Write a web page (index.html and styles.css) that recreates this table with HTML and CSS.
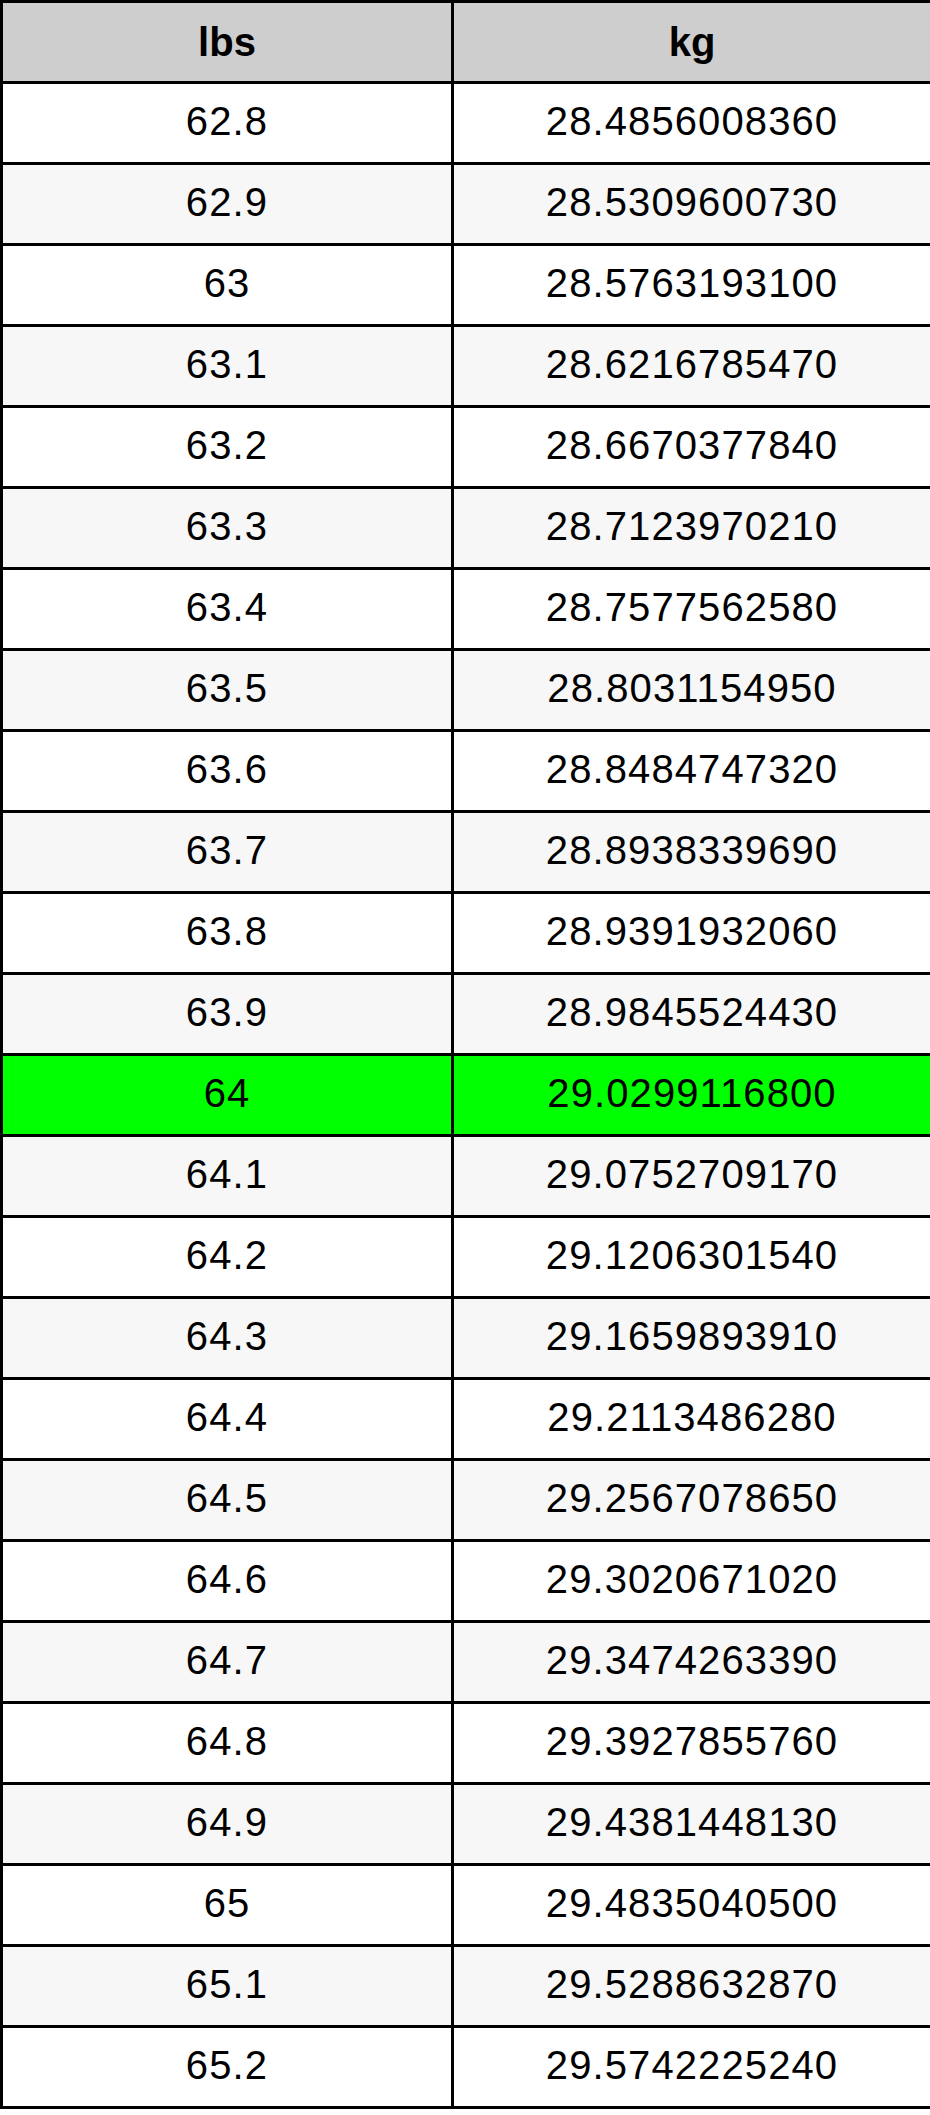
FILE: index.html
```html
<!DOCTYPE html>
<html>
<head>
<meta charset="utf-8">
<link rel="stylesheet" href="styles.css">
</head>
<body>
<table class="conv">
<colgroup><col class="c1"><col class="c2"></colgroup>
<thead>
<tr><th>lbs</th><th>kg</th></tr>
</thead>
<tbody>
<tr><td>62.8</td><td>28.4856008360</td></tr>
<tr><td>62.9</td><td>28.5309600730</td></tr>
<tr><td>63</td><td>28.5763193100</td></tr>
<tr><td>63.1</td><td>28.6216785470</td></tr>
<tr><td>63.2</td><td>28.6670377840</td></tr>
<tr><td>63.3</td><td>28.7123970210</td></tr>
<tr><td>63.4</td><td>28.7577562580</td></tr>
<tr><td>63.5</td><td>28.8031154950</td></tr>
<tr><td>63.6</td><td>28.8484747320</td></tr>
<tr><td>63.7</td><td>28.8938339690</td></tr>
<tr><td>63.8</td><td>28.9391932060</td></tr>
<tr><td>63.9</td><td>28.9845524430</td></tr>
<tr class="hl"><td>64</td><td>29.0299116800</td></tr>
<tr><td>64.1</td><td>29.0752709170</td></tr>
<tr><td>64.2</td><td>29.1206301540</td></tr>
<tr><td>64.3</td><td>29.1659893910</td></tr>
<tr><td>64.4</td><td>29.2113486280</td></tr>
<tr><td>64.5</td><td>29.2567078650</td></tr>
<tr><td>64.6</td><td>29.3020671020</td></tr>
<tr><td>64.7</td><td>29.3474263390</td></tr>
<tr><td>64.8</td><td>29.3927855760</td></tr>
<tr><td>64.9</td><td>29.4381448130</td></tr>
<tr><td>65</td><td>29.4835040500</td></tr>
<tr><td>65.1</td><td>29.5288632870</td></tr>
<tr><td>65.2</td><td>29.5742225240</td></tr>
</tbody>
</table>
</body>
</html>
```
FILE: styles.css
```css
html, body {
  margin: 0;
  padding: 0;
  background: #ffffff;
}
.conv {
  width: 930px;
  border-collapse: collapse;
  table-layout: fixed;
  font-family: "Liberation Sans", Arial, sans-serif;
  font-size: 40px;
  color: #000000;
}
.c1 { width: 451px; }
.c2 { width: 479px; }
.conv th,
.conv td {
  border: 3px solid #000000;
  height: 78px;
  padding: 0;
  text-align: center;
  vertical-align: middle;
  box-sizing: content-box;
  line-height: 46px;
}
.conv td {
  height: 74px;
  padding: 0 0 4px 0;
  letter-spacing: 1.1px;
}
.conv th {
  background: #cecece;
  font-weight: bold;
}
.conv tbody tr:nth-child(odd) td { background: #ffffff; }
.conv tbody tr:nth-child(even) td { background: #f7f7f7; }
.conv tbody tr.hl td { background: #00ff00; }
```
